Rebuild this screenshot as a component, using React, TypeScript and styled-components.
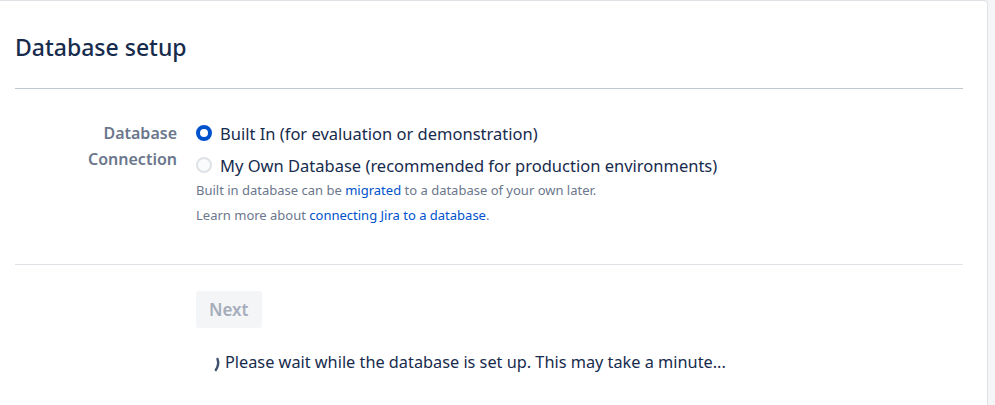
import React from "react";
import styled, { createGlobalStyle } from "styled-components";

const Global = createGlobalStyle`
  html, body { margin: 0; padding: 0; background: #f4f5f7; }
  body { font-family: "Segoe UI", "Noto Sans", sans-serif; color: #172b4d; }
`;

const Card = styled.div`
  box-sizing: border-box;
  width: 989px;
  height: 405px;
  margin-left: -1px;
  background: #ffffff;
  border-top: 1px solid #dfe1e6;
  border-right: 1px solid #dfe1e6;
  border-top-right-radius: 4px;
  padding: 0 24px 0 16px;
`;

const Header = styled.div`
  padding-top: 29px;
  padding-bottom: 24px;
  border-bottom: 1px solid #c1c7d0;
`;

const Title = styled.h1`
  margin: 0;
  font-size: 23px;
  line-height: 34px;
  font-weight: 500;
  color: #172b4d;
`;

const FormSection = styled.div`
  display: grid;
  grid-template-columns: 162px 1fr;
  column-gap: 19px;
  padding-top: 20px;
  padding-bottom: 36px;
  border-bottom: 1px solid #dfe1e6;
`;

const Label = styled.div`
  text-align: right;
  font-size: 16px;
  line-height: 26px;
  font-weight: 600;
  color: #6b778c;
  padding-top: 11px;
`;

const Field = styled.div`
  display: flex;
  flex-direction: column;
  padding-top: 8px;
`;

const RadioRow = styled.label`
  display: flex;
  align-items: center;
  gap: 8px;
  height: 32px;
  font-size: 16.5px;
  color: #172b4d;
`;

const RadioDot = styled.span<{ $checked?: boolean }>`
  box-sizing: border-box;
  width: 16px;
  height: 16px;
  border-radius: 50%;
  flex: none;
  background: ${(p) => (p.$checked ? "#ffffff" : "#fafbfc")};
  border: ${(p) => (p.$checked ? "4.5px solid #0052cc" : "2px solid #dfe1e6")};
`;

const Help = styled.p`
  margin: 0;
  font-size: 13px;
  line-height: 25px;
  color: #6b778c;
  &:first-of-type {
    margin-top: -3px;
  }
`;

const Link = styled.a`
  color: #0052cc;
  text-decoration: none;
`;

const Actions = styled.div`
  padding-left: 181px;
  padding-top: 26px;
  display: flex;
  flex-direction: column;
  align-items: flex-start;
`;

const Button = styled.button`
  height: 37px;
  padding: 0 13px;
  border: none;
  border-radius: 3px;
  background: #f4f5f7;
  color: #a5adba;
  font-family: inherit;
  font-size: 17px;
  font-weight: 600;
  cursor: not-allowed;
`;

const Wait = styled.div`
  display: flex;
  align-items: center;
  gap: 4px;
  margin-top: 22px;
  padding-left: 17px;
  font-size: 16.3px;
  line-height: 24px;
  color: #172b4d;
`;

const Spinner = () => (
  <svg width="8" height="16" viewBox="0 0 8 16" style={{ marginTop: 6 }}>
    <path d="M4.5 2 Q6.5 7.5 2.8 13" fill="none" stroke="#42526e" strokeWidth="2.4" strokeLinecap="round" />
  </svg>
);

export default function App() {
  return (
    <>
      <Global />
      <Card>
        <Header>
          <Title>Database setup</Title>
        </Header>
        <FormSection>
          <Label>
            Database
            <br />
            Connection
          </Label>
          <Field>
            <RadioRow>
              <RadioDot $checked />
              Built In (for evaluation or demonstration)
            </RadioRow>
            <RadioRow>
              <RadioDot />
              My Own Database (recommended for production environments)
            </RadioRow>
            <Help>
              Built in database can be <Link href="#">migrated</Link> to a database of your own later.
            </Help>
            <Help>
              Learn more about <Link href="#">connecting Jira to a database</Link>.
            </Help>
          </Field>
        </FormSection>
        <Actions>
          <Button disabled>Next</Button>
          <Wait>
            <Spinner />
            Please wait while the database is set up. This may take a minute...
          </Wait>
        </Actions>
      </Card>
    </>
  );
}
